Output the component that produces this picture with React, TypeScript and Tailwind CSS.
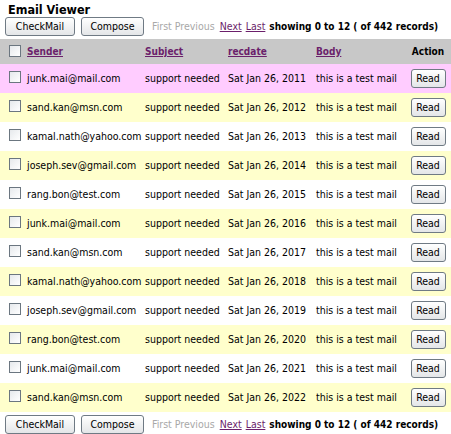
import React from "react";

const emails = [
  "junk.mai@mail.com",
  "sand.kan@msn.com",
  "kamal.nath@yahoo.com",
  "joseph.sev@gmail.com",
  "rang.bon@test.com",
];

const rows = Array.from({ length: 12 }, (_, i) => ({
  sender: emails[i % 5],
  subject: "support needed",
  recdate: `Sat Jan 26, ${2011 + i}`,
  body: "this is a test mail",
}));

function Box() {
  return (
    <span className="inline-block h-[12px] w-[12px] border border-[#6b7680] bg-gradient-to-br from-[#e6e9ec] to-white" />
  );
}

function Btn({ children, className = "" }: { children: React.ReactNode; className?: string }) {
  return (
    <button
      type="button"
      className={`h-[19px] whitespace-nowrap rounded-[3px] border border-[#6f7a84] bg-gradient-to-b from-white to-[#e4e6e8] text-[10.5px] leading-none text-black ${className}`}
    >
      {children}
    </button>
  );
}

function Toolbar() {
  return (
    <div className="flex items-center whitespace-nowrap pl-[5px] text-[10.5px]">
      <Btn className="w-[70px]">CheckMail</Btn>
      <Btn className="ml-[6px] w-[63px]">Compose</Btn>
      <span className="ml-[8px] text-[#a8a8a8]">First Previous</span>
      <span className="ml-[5px] text-[#6b1f6b] underline">Next</span>
      <span className="ml-[4px] text-[#6b1f6b] underline">Last</span>
      <span className="ml-[4px] text-[10px] font-bold text-black">showing 0 to 12 ( of 442 records)</span>
    </div>
  );
}

export default function App() {
  return (
    <div
      className="h-[434px] w-[451px] overflow-hidden bg-white text-[10.5px] text-black font-stretch-condensed"
      style={{ fontFamily: '"DejaVu Sans Condensed", "DejaVu Sans", Verdana, sans-serif' }}
    >
      <h1 className="pl-[8px] pt-[3px] text-[12.5px] font-bold leading-[14px]">Email Viewer</h1>
      <Toolbar />
      <div className="mt-[3px]">
        <div className="grid h-[25px] grid-cols-[27px_118px_83px_88px_89px_1fr] items-center bg-[#c8c8c8] text-[10px] font-bold text-[#6b1f6b]">
          <span className="pl-[9px] pt-[2px]"><Box /></span>
          <span className="underline">Sender</span>
          <span className="underline">Subject</span>
          <span className="underline">recdate</span>
          <span className="underline">Body</span>
          <span className="text-center text-black">Action</span>
        </div>
        {rows.map((r, i) => (
          <div
            key={i}
            className={`grid h-[29px] grid-cols-[27px_118px_83px_88px_89px_1fr] items-center ${
              i === 0 ? "bg-[#ffccff]" : i % 2 === 1 ? "bg-[#ffffcc]" : "bg-white"
            }`}
          >
            <span className="pl-[9px] pt-[2px]"><Box /></span>
            <span className="whitespace-nowrap">{r.sender}</span>
            <span className="whitespace-nowrap">{r.subject}</span>
            <span className="whitespace-nowrap">{r.recdate}</span>
            <span className="whitespace-nowrap">{r.body}</span>
            <span className="flex justify-center">
              <Btn className="w-[35px]">Read</Btn>
            </span>
          </div>
        ))}
      </div>
      <div className="mt-[3px]">
        <Toolbar />
      </div>
    </div>
  );
}
